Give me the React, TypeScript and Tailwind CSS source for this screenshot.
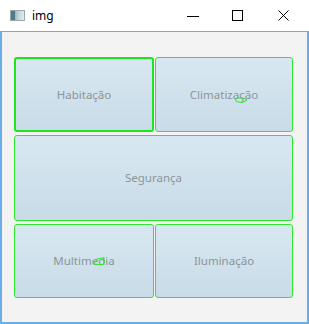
import React from "react";

const font = { fontFamily: '"Segoe UI", "Noto Sans", "Open Sans", sans-serif' };

function Btn({ label, focused, children }: { label: string; focused?: boolean; children?: React.ReactNode }) {
  return (
    <div
      className={
        "relative flex items-center justify-center rounded-[3px] bg-gradient-to-b from-[#d8e8f2] to-[#c8dbe7] text-[11.5px] text-[#8d949a] " +
        (focused ? "border-2 border-[#1ee61e]" : "border border-[#2ee82e]")
      }
    >
      <span>{label}</span>
      {children}
    </div>
  );
}

export default function App() {
  return (
    <div className="w-[309px] h-[324px] bg-white flex flex-col" style={font}>
      <div className="h-[31px] flex items-center shrink-0 relative">
        <div className="ml-[10px] w-[15px] h-[11px] border border-[#9aa7b0] bg-gradient-to-r from-[#5f8d94] via-[#b9cfd6] to-[#e4ecef] flex">
          <div className="w-[4px] h-full bg-[#4d7d86]" />
        </div>
        <span className="ml-[7px] text-[12px] text-black leading-none">img</span>
        <div className="flex-1" />
        <svg width="12" height="12" viewBox="0 0 12 12" className="mr-[33px]">
          <line x1="0" y1="6.5" x2="12" y2="6.5" stroke="#000" strokeWidth="1" />
        </svg>
        <svg width="11" height="11" viewBox="0 0 11 11" className="mr-[35px]">
          <rect x="0.5" y="0.5" width="10" height="10" fill="none" stroke="#000" strokeWidth="1" />
        </svg>
        <svg width="11" height="11" viewBox="0 0 11 11" className="mr-[20px]">
          <path d="M0.5 0.5 L10.5 10.5 M10.5 0.5 L0.5 10.5" stroke="#000" strokeWidth="1" />
        </svg>
      </div>
      <div className="flex-1 border-t border-t-[#a0a0a0] border-x-2 border-b-2 border-x-[#6aaee8] border-b-[#6aaee8] bg-[#f3f3f3] pl-[12px] pt-[25px]">
        <div className="grid grid-cols-[140px_138px] grid-rows-[75px_86px_74px] gap-x-[1px] gap-y-[3px]">
          <Btn label="Habitação" focused />
          <Btn label="Climatização">
            <svg className="absolute left-[78px] top-[39px]" width="14" height="7" viewBox="0 0 14 7">
              <path d="M1 2 Q7 -1 13 3 Q9 7 4 5 Q1 4 1 2 Z" fill="none" stroke="#2ee82e" strokeWidth="1" />
            </svg>
          </Btn>
          <div className="col-span-2 grid">
            <Btn label="Segurança" />
          </div>
          <Btn label="Multimedia">
            <svg className="absolute left-[78px] top-[32px]" width="13" height="9" viewBox="0 0 13 9">
              <path d="M1 7 L4 2 L10 1 L12 5 L9 8 Z" fill="none" stroke="#2ee82e" strokeWidth="1" />
            </svg>
          </Btn>
          <Btn label="Iluminação" />
        </div>
      </div>
    </div>
  );
}
